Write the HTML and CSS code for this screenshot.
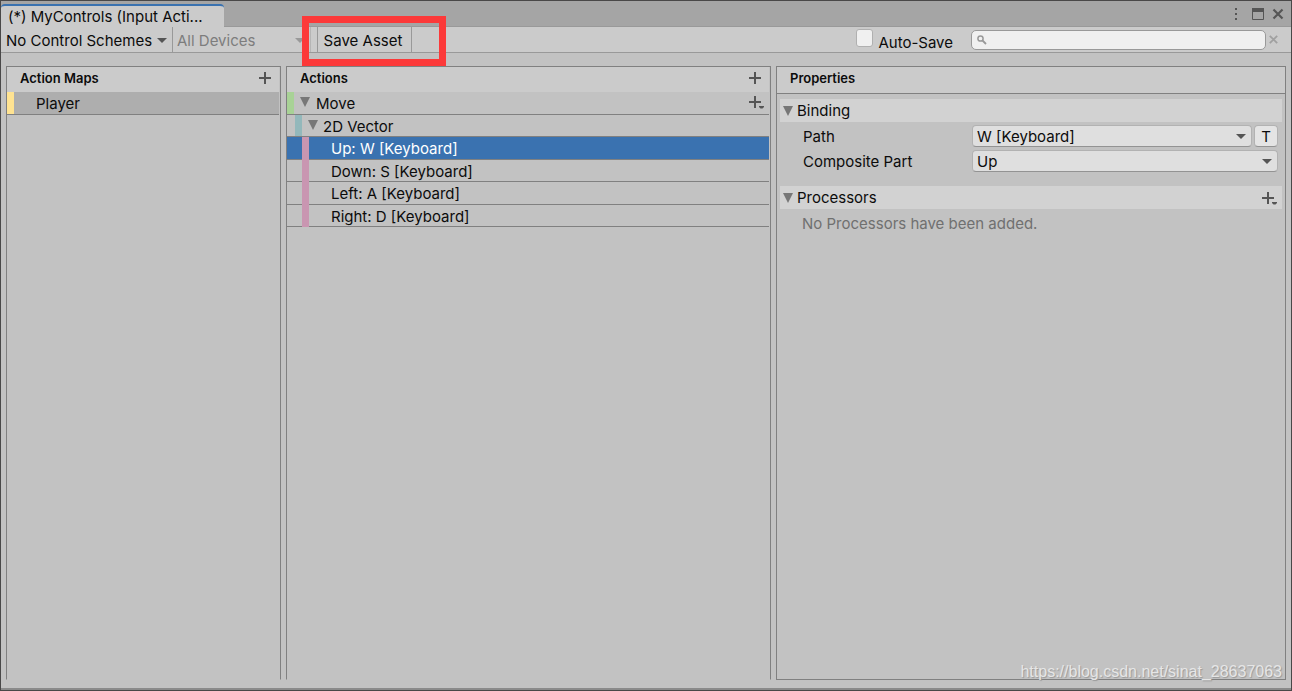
FILE: index.html
```html
<!DOCTYPE html>
<html lang="en">
<head>
    <meta charset="UTF-8">
    <meta name="viewport" content="width=device-width, initial-scale=1.0">
    <title>MyControls (Input Actions)</title>
    <link rel="stylesheet" href="styles.css">
</head>
<body>
    <div class="window">
        <div class="tab-bar">
            <div class="tab">(*) MyControls (Input Acti...</div>
            <div class="window-buttons">
                <button class="icon-button" aria-label="Menu">
                    <svg width="12" height="12" viewBox="0 0 12 12"><path d="M3 0h2v2H3zM3 5h2v2H3zM3 10h2v2H3z" fill="#555"/></svg>
                </button>
                <button class="icon-button" aria-label="Maximize">
                    <svg width="12" height="12" viewBox="0 0 12 12"><path d="M.5.5h11v11H.5z" fill="none" stroke="#555"/><path d="M0 0h12v4H0z" fill="#555"/></svg>
                </button>
                <button class="icon-button" aria-label="Close">
                    <svg width="12" height="12" viewBox="0 0 12 12"><path d="M1.5 1.5l9 9M10.5 1.5l-9 9" stroke="#555" stroke-width="2.2"/></svg>
                </button>
            </div>
        </div>

        <div class="toolbar">
            <div class="dropdown schemes">
                <select aria-label="Control scheme"><option>No Control Schemes</option></select>
            </div>
            <div class="dropdown devices">
                <select aria-label="Devices" disabled><option>All Devices</option></select>
            </div>
            <button class="save-button">Save Asset</button>
            <div class="toolbar-right">
                <input type="checkbox" id="auto-save" class="check">
                <label for="auto-save" class="auto-label">Auto-Save</label>
                <div class="search">
                    <svg width="10" height="10" viewBox="0 0 10 10"><circle cx="3.5" cy="3.5" r="2.6" fill="none" stroke="#999" stroke-width="1.5"/><path d="M5.5 5.5l3.5 3.5" stroke="#999" stroke-width="1.8"/></svg>
                    <input type="text" aria-label="Search">
                </div>
                <button class="icon-button" aria-label="Clear search">
                    <svg width="9" height="9" viewBox="0 0 9 9"><path d="M.8.8l7.4 7.4M8.2.8L.8 8.2" stroke="#a0a0a0" stroke-width="1.8"/></svg>
                </button>
            </div>
            <div class="highlight"></div>
        </div>

        <div class="panels">
            <section class="panel">
                <div class="panel-header">
                    <h2>Action Maps</h2>
                    <button class="icon-button add" aria-label="Add action map">
                        <svg width="16" height="14" viewBox="0 0 16 14"><path d="M6 1v12M0 7h12" stroke="#555" stroke-width="2"/></svg>
                    </button>
                </div>
                <ul class="tree">
                    <li class="row map-row"><span class="mark yellow"></span>Player</li>
                </ul>
            </section>

            <section class="panel">
                <div class="panel-header">
                    <h2>Actions</h2>
                    <button class="icon-button add" aria-label="Add action">
                        <svg width="16" height="14" viewBox="0 0 16 14"><path d="M6 1v12M0 7h12" stroke="#555" stroke-width="2"/></svg>
                    </button>
                </div>
                <ul class="tree">
                    <li class="row level-1"><span class="mark green"></span><span class="arrow"></span>Move
                        <button class="icon-button add" aria-label="Add binding">
                            <svg width="16" height="14" viewBox="0 0 16 14"><path d="M6 1v12M0 7h12" stroke="#555" stroke-width="2"/><path d="M10 11h5v1l-1.500 1.500h-2L10 12z" fill="#555"/></svg>
                        </button>
                    </li>
                    <li class="row level-2"><span class="mark teal"></span><span class="arrow"></span>2D Vector</li>
                    <li class="row level-3 selected"><span class="mark pink"></span>Up: W [Keyboard]</li>
                    <li class="row level-3"><span class="mark pink"></span>Down: S [Keyboard]</li>
                    <li class="row level-3"><span class="mark pink"></span>Left: A [Keyboard]</li>
                    <li class="row level-3"><span class="mark pink"></span>Right: D [Keyboard]</li>
                </ul>
            </section>

            <section class="panel properties">
                <div class="panel-header">
                    <h2>Properties</h2>
                </div>
                <div class="foldout"><span class="arrow"></span>Binding</div>
                <div class="fields">
                    <div class="field">
                        <label for="path">Path</label>
                        <div class="field-value">
                            <div class="dropdown box">
                                <select id="path"><option>W [Keyboard]</option></select>
                            </div>
                            <button class="text-button">T</button>
                        </div>
                    </div>
                    <div class="field">
                        <label for="part">Composite Part</label>
                        <div class="field-value">
                            <div class="dropdown box">
                                <select id="part"><option>Up</option></select>
                            </div>
                        </div>
                    </div>
                </div>
                <div class="foldout"><span class="arrow"></span>Processors
                    <button class="icon-button add" aria-label="Add processor">
                        <svg width="16" height="14" viewBox="0 0 16 14"><path d="M6 1v12M0 7h12" stroke="#555" stroke-width="2"/><path d="M10 11h5v1l-1.500 1.500h-2L10 12z" fill="#555"/></svg>
                    </button>
                </div>
                <p class="empty">No Processors have been added.</p>
            </section>
        </div>
        <div class="watermark">https://blog.csdn.net/sinat_28637063</div>
    </div>
</body>
</html>
```
FILE: styles.css
```css
* {
    box-sizing: border-box;
}
body {
    margin: 0;
    font-family: Inter, "Liberation Sans", sans-serif;
    font-size: 15px;
    color: #0c0c0c;
}
button, input, select {
    font: inherit;
    color: inherit;
}
.window {
    position: relative;
    display: flex;
    flex-direction: column;
    height: 100vh;
    border: 1px solid #494848;
    background-color: #c2c2c2;
}
.window::after {
    content: "";
    height: 2px;
    background-color: #8a8a8a;
}
.icon-button {
    display: flex;
    padding: 0;
    border: none;
    background: none;
    cursor: pointer;
}

/* tab bar */
.tab-bar {
    display: flex;
    justify-content: space-between;
    height: 26px;
    background-color: #a5a5a5;
    border-bottom: 1px solid #999;
}
.tab {
    width: 223px;
    height: 23px;
    margin-top: 3px;
    padding-left: 7px;
    line-height: 22px;
    background-color: #cbcbcb;
    border-top: 2px solid #3a72b0;
    border-radius: 4px 4px 0 0;
}
.window-buttons {
    display: flex;
    align-items: center;
    gap: 8px;
    padding: 1px 7px 0 0;
}

/* toolbar */
.toolbar {
    position: relative;
    display: flex;
    height: 26px;
    background-color: #cbcbcb;
    border-bottom: 1px solid #999;
}
.dropdown {
    position: relative;
}
.dropdown select {
    appearance: none;
    width: 100%;
    height: 100%;
    padding: 2px 0 0 5px;
    border: none;
    background: none;
    opacity: 1;
}
.dropdown::after {
    content: "";
    position: absolute;
    top: 50%;
    right: 5px;
    margin-top: -2px;
    border: 5px solid transparent;
    border-top-color: #555;
    border-bottom: none;
    pointer-events: none;
}
.schemes {
    width: 172px;
    border-right: 1px solid #999;
}
.devices {
    width: 138px;
    margin-right: 6px;
    border-right: 1px solid #b5b5b5;
    color: #7d7d7d;
}
.dropdown.devices select {
    padding-left: 4px;
}
.devices::after {
    border-top-color: #999;
}
.save-button {
    width: 95px;
    padding: 2px 3px 0 0;
    background: none;
    border: solid #999;
    border-width: 0 1px;
}
.toolbar-right {
    display: flex;
    align-items: center;
    margin-left: auto;
    padding-right: 13px;
}
.check {
    appearance: none;
    width: 17px;
    height: 18px;
    margin: 0 5px 4px 0;
    background-color: #f0f0f0;
    border: 1px solid #b0b0b0;
    border-radius: 3px;
}
.auto-label {
    margin-right: 18px;
    padding-top: 5px;
}
.search {
    display: flex;
    align-items: center;
    width: 295px;
    height: 20px;
    margin-right: 3px;
    padding-left: 5px;
    background-color: #f0f0f0;
    border: 1px solid #999;
    border-radius: 5px;
}
.search input {
    flex: 1;
    min-width: 0;
    padding: 0 5px;
    border: none;
    background: none;
    outline: none;
}
.highlight {
    position: absolute;
    top: -11px;
    left: 301px;
    width: 144px;
    height: 50px;
    border: 7px solid #fc3939;
    pointer-events: none;
}

/* panels */
.panels {
    flex: 1;
    display: grid;
    grid-template-columns: 275fr 485fr 510fr;
    gap: 5px;
    padding: 13px 5px 8px;
}
.panel {
    min-width: 0;
    padding-right: 1px;
    border: 1px solid #808080;
    border-bottom-color: transparent;
}
.panel-header {
    display: flex;
    align-items: center;
    justify-content: space-between;
    height: 25px;
    padding: 0 4px 3px 13px;
    background-color: #cbcbcb;
}
.panel-header h2 {
    margin: 0;
    font-size: 13px;
    font-weight: 600;
}
.tree {
    margin: 0;
    padding: 0;
    list-style: none;
}
.row {
    display: flex;
    align-items: center;
    height: 23px;
    line-height: 18px;
    padding-top: 2px;
    border-bottom: 1px solid #808080;
}
.row:nth-child(even) {
    height: 22px;
}
.mark {
    align-self: stretch;
    flex: none;
    width: 7px;
    margin-top: -2px;
}
.yellow {
    background-color: #ffe391;
}
.green {
    background-color: #a8d296;
}
.teal {
    background-color: #93b8bb;
}
.pink {
    margin: -2px 22px -1px 0;
    background-color: #c996b1;
}
.map-row {
    background-color: #aeaeae;
}
.map-row .mark {
    margin-right: 22px;
}
.level-1 .arrow {
    margin: 0 6px 4px;
}
.level-2 {
    padding-left: 8px;
}
.level-2 .arrow {
    margin: 0 5px 3px 6px;
}
.level-3 {
    padding-left: 15px;
}
.selected {
    background-color: #3a72b0;
    color: #fff;
}
.arrow {
    flex: none;
    border: 5px solid transparent;
    border-top: 10px solid #777;
    border-bottom: none;
}
.row .add {
    margin: 0 4px 4px auto;
}

/* properties */
.properties {
    padding-right: 0;
    border-bottom-color: #808080;
}
.properties .panel-header {
    height: 27px;
    padding-bottom: 4px;
    border-bottom: 1px solid #808080;
}
.foldout {
    display: flex;
    align-items: center;
    height: 23px;
    margin: 5px 3px 0;
    padding: 0 4px 0 3px;
    background-color: #d2d2d2;
}
.foldout .arrow {
    margin-right: 4px;
}
.foldout .add {
    margin-left: auto;
}
.fields {
    display: grid;
    gap: 3px;
    padding: 3px 7px 9px 26px;
}
.field {
    display: flex;
    align-items: center;
}
.field label {
    flex: 1;
}
.field-value {
    display: flex;
    gap: 2px;
    flex: none;
    width: 306px;
    height: 22px;
}
.box {
    flex: 1;
}
.dropdown.box select, .text-button {
    padding: 0 0 0 4px;
    background-color: #dfdfdf;
    border: 1px solid #b2b2b2;
    border-bottom-color: #939393;
    border-radius: 4px;
}
.text-button {
    width: 24px;
    padding: 0;
    background-color: #e4e4e4;
}
.box::after {
    right: 6px;
}
.empty {
    margin: 6px 25px;
    line-height: 18px;
    color: #707070;
}
.watermark {
    position: absolute;
    right: 9px;
    bottom: 9px;
    font-family: "Liberation Sans", Arial, sans-serif;
    font-size: 16px;
    line-height: 18px;
    color: #e6e6e6;
    text-shadow: 1px 1px 1px #999;
}
```
